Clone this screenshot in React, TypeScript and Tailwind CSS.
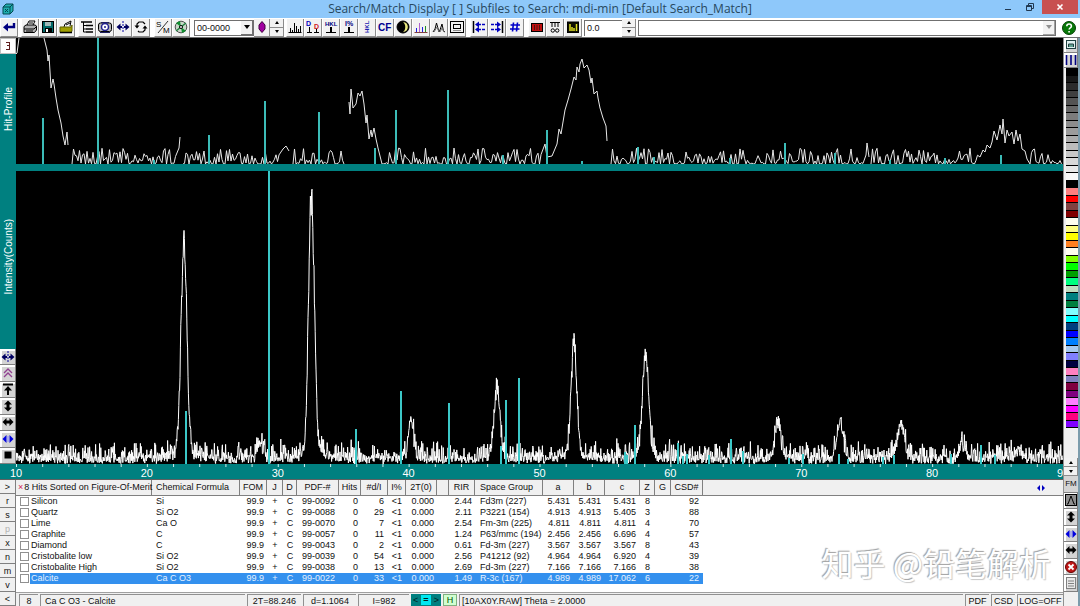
import React from 'react';

interface Peak {
  x: number;
  height: number;
  width: number;
}

type Point = [number, number];

const PLOT_WIDTH = 1047;
const MAIN_HEIGHT = 293;
const HIT_HEIGHT = 126;

const hits = [
  ['Silicon', 'Si', '99-0092', '6', '2.44', 'Fd3m (227)', '5.431', '5.431', '5.431', '8', '92'],
  ['Quartz', 'Si O2', '99-0088', '29', '2.11', 'P3221 (154)', '4.913', '4.913', '5.405', '3', '88'],
  ['Lime', 'Ca O', '99-0070', '7', '2.54', 'Fm-3m (225)', '4.811', '4.811', '4.811', '4', '70'],
  ['Graphite', 'C', '99-0057', '11', '1.24', 'P63/mmc (194)', '2.456', '2.456', '6.696', '4', '57'],
  ['Diamond', 'C', '99-0043', '2', '0.61', 'Fd-3m (227)', '3.567', '3.567', '3.567', '8', '43'],
  ['Cristobalite low', 'Si O2', '99-0039', '54', '2.56', 'P41212 (92)', '4.964', '4.964', '6.920', '4', '39'],
  ['Cristobalite High', 'Si O2', '99-0038', '13', '2.69', 'Fd-3m (227)', '7.166', '7.166', '7.166', '8', '38'],
  ['Calcite', 'Ca C O3', '99-0022', '33', '1.49', 'R-3c (167)', '4.989', '4.989', '17.062', '6', '22'],
];

const mainPeaks: Peak[] = [
  { x: 168, height: 203, width: 4.1 },
  { x: 295.5, height: 250, width: 4 },
  { x: 244, height: 14, width: 3 },
  { x: 395, height: 36, width: 3.6 },
  { x: 481, height: 68, width: 4 },
  { x: 558, height: 108, width: 4 },
  { x: 629.5, height: 103, width: 4.2 },
  { x: 762, height: 35, width: 4 },
  { x: 824, height: 38, width: 4 },
  { x: 885, height: 32, width: 4.5 },
  { x: 946, height: 14, width: 4 },
  { x: 1003, height: 7, width: 4 },
];

// [x, stick height]
const mainSticks: Point[] = [
  [170, 53], [253, 293], [340, 35], [385, 73], [433, 61], [485, 18], [490, 64], [503, 86],
  [609, 12], [611, 9], [619, 39], [662, 21], [667, 8], [671, 10], [693, 9], [715, 25], [727, 13],
  [773, 6], [787, 10], [823, 10], [832, 5], [867, 7], [878, 9], [935, 10], [965, 19], [979, 9],
];

const hitSticks: Point[] = [
  [27, 46], [82, 126], [138, 4], [193, 29], [249, 63], [303, 52], [359, 16], [380, 54], [432, 74],
  [487, 9], [531, 34], [566, 3], [622, 17], [638, 7], [714, 6], [769, 21], [819, 11], [874, 4],
  [929, 6], [985, 9],
];

function random(seed: number) {
  let s = seed;
  return () => {
    s = (s * 16807) % 2147483647;
    return s / 2147483647;
  };
}

function buildMainTrace() {
  const rnd = random(4711);
  const pts: string[] = [];
  for (let x = 0; x <= PLOT_WIDTH; x += 0.4) {
    let signal = 0;
    for (const p of mainPeaks) {
      const d = (x - p.x) / p.width;
      signal += p.height * Math.exp(-0.97 * d * d) + (p.height * 0.05) / (1 + (d * d) / 4);
    }
    const noise = Math.pow(rnd(), 4) * 17 + rnd() * 8;
    const jitter = (rnd() - 0.5) * Math.sqrt(signal) * 2.4;
    const y = MAIN_HEIGHT - Math.max(0, signal + jitter + (signal > 25 ? 6 : noise));
    pts.push(`${x.toFixed(1)},${y.toFixed(1)}`);
  }
  return pts.join(' ');
}

function noiseSegment(from: number, to: number, seed: number) {
  const rnd = random(seed);
  const pts: Point[] = [];
  for (let x = from; x <= to; x += 1.5) {
    pts.push([x, HIT_HEIGHT - Math.pow(rnd(), 2.2) * 16]);
  }
  return pts;
}

const hitSegments: Point[][] = [
  [[0, 16], [1, 15], [3, 0]],
  [[28, 0], [31, 12], [32, 23], [33, 17], [35, 50], [37, 41], [38, 46], [40, 60], [42, 72], [45, 85], [47, 98], [49, 107], [51, 94], [52, 107]],
  [...noiseSegment(56, 160, 91), [163, 110], [164, 99]],
  [...noiseSegment(167, 264, 17), [267, 111], [270, 108], [273, 113]],
  noiseSegment(277, 329, 53),
  [
    [333, 64], [334, 76], [335, 51], [337, 70], [340, 66], [342, 55], [344, 58], [346, 53], [348, 66], [350, 85],
    [351, 77], [353, 101], [355, 92], [356, 99], [358, 90], [360, 101], [362, 110], [364, 118], ...noiseSegment(366, 526, 77),
    [529, 106], [531, 119], [536, 118], [541, 106], [543, 91], [545, 96], [549, 72], [552, 62], [555, 51], [558, 39],
    [560, 42], [561, 29], [563, 34], [564, 26], [566, 21], [568, 30], [571, 27], [573, 32], [575, 45], [576, 40],
    [578, 56], [581, 53], [582, 60], [584, 70], [587, 80], [590, 88], [591, 103],
  ],
  [...noiseSegment(595, 848, 129), [850, 117], [851, 105], [853, 119]],
  [
    ...noiseSegment(855, 962, 15), [964, 119], [967, 112], [969, 114], [971, 107], [974, 110], [976, 104], [978, 93],
    [981, 102], [984, 87], [986, 96], [987, 81], [989, 105], [991, 92], [993, 98], [996, 94], [998, 106], [1000, 92],
    [1002, 103], [1004, 96], [1006, 111], [1009, 113], [1011, 121], ...noiseSegment(1014, 1046, 303),
  ],
];

const mainTrace = buildMainTrace();

const swatches = [
  '#000000', '#181818', '#2c2c2c', '#404040', '#545454', '#686868', '#7c7c7c', '#8c8c8c', '#9c9c9c', '#acacac',
  '#bcbcbc', '#c8c8c8', '#d8d8d8', '#e8e8e8', '#f8f8f8', '#000000', '#ff8080', '#ff0000', '#804040', '#800000',
  '#fffff0', '#ffff80', '#ffff00', '#ff8020', '#fffff0', '#80ff00', '#00ff00', '#00a000', '#00ff80', '#c0dcc0',
  '#008080', '#008040', '#80ffff', '#00ffff', '#004080', '#0000ff', '#0080ff', '#a6caf0', '#8080ff', '#000040',
  '#ff80c0', '#8080c0', '#800040', '#800080', '#ff80ff', '#ff00ff', '#ff0080', '#8000ff',
];

const Icon: React.FC<{ children: React.ReactNode }> = ({ children }) => (
  <svg viewBox="0 0 14 14" className="h-3.5 w-3.5 shrink-0" fill="none" stroke="#000" aria-hidden="true">
    {children}
  </svg>
);

const SplitArrows = () => (
  <Icon>
    <path d="M7 1v12" stroke="#0000a0" strokeDasharray="2 1" />
    <path d="M0.500 7l4-3.500v7zM13.500 7l-4-3.500v7z" fill="#000060" stroke="none" />
    <path d="M3 7h3M8 7h3" stroke="#000060" strokeWidth="2" />
  </Icon>
);

const UpDown = () => (
  <Icon>
    <path d="M7 1.500l4 4H3zM7 12.500l4-4H3z" fill="#000" stroke="none" />
    <path d="M7 4v6" strokeWidth="3" />
  </Icon>
);

const LeftRight = () => (
  <Icon>
    <path d="M1.500 7l4-4v8zM12.500 7l-4-4v8z" fill="#000" stroke="none" />
    <path d="M4 7h6" strokeWidth="3" />
  </Icon>
);

const BlueLeftRight = () => (
  <Icon>
    <path d="M1.500 7l4-4v8zM12.500 7l-4-4v8z" fill="#0000e0" stroke="none" />
    <path d="M7 4v6" stroke="#8080ff" />
  </Icon>
);

const toolIcons: Record<string, React.ReactNode> = {
  Return: (
    <Icon>
      <path d="M12 3v4H5" stroke="#000080" strokeWidth="2.4" />
      <path d="M1 7.2l5-4.2v8.4z" fill="#000080" stroke="none" />
    </Icon>
  ),
  Print: (
    <Icon>
      <path d="M4 5l2-4h6l-2 4" fill="#fff" />
      <path d="M1 6.5L3 5h9l1.5 1V10l-2 2.5H1z" fill="#b0b0b0" />
      <path d="M1 9h10l2-2M3 11h7M6 3h4" />
    </Icon>
  ),
  Save: (
    <Icon>
      <rect x="1.5" y="1.5" width="11" height="11" fill="#006868" />
      <rect x="4" y="2" width="6" height="4" fill="#a0b8b8" stroke="none" />
      <rect x="4" y="8" width="7" height="5" fill="#000" stroke="none" />
      <rect x="5" y="9" width="2" height="3" fill="#fff" stroke="none" />
    </Icon>
  ),
  Open: (
    <Icon>
      <path d="M5 7l1-3 6-3-1 5M7 5l4-2" fill="#fff" />
      <path d="M1 7h11l1-2v6l-1 1.5H1z" fill="#a0a000" stroke="#606000" />
      <path d="M1 12.5h12" strokeWidth="1.5" />
    </Icon>
  ),
  Outline: (
    <Icon>
      <path d="M1 2h11M6 5.500h7M6 9h7M6 12h7" strokeWidth="1.6" />
      <path d="M3.5 2v10H6M3.500 5.500H6M3.500 9H6" />
    </Icon>
  ),
  Camera: (
    <Icon>
      <rect x="0.5" y="3" width="13" height="8.5" rx="2" fill="#b8b8b8" />
      <circle cx="7" cy="7" r="3.5" fill="#fff" stroke="#202090" strokeWidth="1.5" />
      <circle cx="7" cy="7" r="1" fill="#202090" stroke="none" />
      <path d="M3 2.5h8M2 12.5h10" stroke="#202060" />
    </Icon>
  ),
  Split: <SplitArrows />,
  Cycle: (
    <Icon>
      <path d="M3 6V4l2-2h4l2 2M11 8v2l-2 2H5l-1-1" strokeWidth="1.2" />
      <path d="M0.5 5.500h5L3 8.500zM8.5 8.500h5L11 5.500z" fill="#000" stroke="none" />
    </Icon>
  ),
  'Search match': (
    <Icon>
      <path d="M2 13L12 1" strokeWidth="0.8" />
      <text x="0" y="7" fontSize="8" fontFamily="Liberation Sans" fill="#000" stroke="none">S</text>
      <text x="7" y="13" fontSize="8" fontFamily="Liberation Sans" fill="#000" stroke="none">M</text>
    </Icon>
  ),
  Disc: (
    <Icon>
      <circle cx="7" cy="7" r="5.8" fill="#c8d8c8" stroke="#505050" />
      <path d="M7 7L2 3l4-2zM7 7l5 4-4 2z" fill="#109030" stroke="none" />
      <path d="M7 7l5-4M7 7l-5 4" stroke="#208040" strokeWidth="1.5" />
      <circle cx="7" cy="7" r="1.5" fill="#fff" />
    </Icon>
  ),
  Sticks: (
    <Icon>
      <path d="M0.5 12.5h13M2.5 12V8M4.5 12V10M6.5 12V3M8.5 12V6M10.5 12V9M12.5 12V6" />
    </Icon>
  ),
  'D labels': (
    <Icon>
      <path d="M3.5 7v5M10.5 9v3" />
      <path d="M1 12.5h5M8 12.5h5" />
      <text x="0" y="6" fontSize="7" fontWeight="bold" fontFamily="Liberation Sans" fill="#0000c0" stroke="none">D</text>
      <text x="8" y="9" fontSize="7" fontWeight="bold" fontFamily="Liberation Sans" fill="#d02020" stroke="none">D</text>
    </Icon>
  ),
  'HKL labels': (
    <Icon>
      <text x="1" y="6" fontSize="6" fontWeight="bold" fontFamily="Liberation Sans" fill="#000080" stroke="none">HKL</text>
      <path d="M7 7v5" strokeWidth="2" />
      <path d="M2 12.5h10" />
    </Icon>
  ),
  'Intensity labels': (
    <Icon>
      <text x="3" y="6" fontSize="7" fontWeight="bold" fontFamily="Liberation Sans" fill="#000080" stroke="none">I%</text>
      <path d="M7 7v5" strokeWidth="2" />
      <path d="M2 12.5h10" />
    </Icon>
  ),
  'Vertical labels': (
    <Icon>
      <text x="1" y="9" transform="rotate(-90 7 7)" fontSize="6" fontWeight="bold" fontFamily="Liberation Sans" fill="#2020b0" stroke="none">HKL</text>
    </Icon>
  ),
  CF: (
    <Icon>
      <text x="0" y="11" fontSize="10" fontWeight="bold" fontFamily="Liberation Sans" fill="#000090" stroke="none">CF</text>
    </Icon>
  ),
  Contrast: (
    <Icon>
      <circle cx="7" cy="7" r="6" fill="#000" />
      <path d="M7 2c3 2 3 8 0 10c6.500 0 6.500-10 0-10z" fill="#e8e880" stroke="none" />
    </Icon>
  ),
  'Color sticks': (
    <Icon>
      <path d="M0.5 12.5h13" stroke="#804040" />
      <path d="M2.5 12V8M8.5 12V7" stroke="#2020e0" />
      <path d="M5.5 12V3" stroke="#b060d0" />
      <path d="M11.5 12V6" stroke="#209020" />
    </Icon>
  ),
  Profiles: (
    <Icon>
      <path d="M1 12l2-3 1.500-6 2.500 9 1-2 2-6 1.500 7 1.500 1" />
      <path d="M2 12l3-5 2 5M8 12l2-4 2 4" stroke="#707070" />
    </Icon>
  ),
  Frame: (
    <Icon>
      <rect x="0.5" y="1.5" width="13" height="11" />
      <rect x="3.5" y="4.5" width="7" height="4" />
      <path d="M3 10.5h8" stroke="#909090" />
    </Icon>
  ),
  'Shift left': (
    <Icon>
      <path d="M1.5 1v12" strokeWidth="1.5" />
      <path d="M6 4.5h7M6 9.5h7" stroke="#0000c0" strokeWidth="1.5" strokeDasharray="3 1" />
      <path d="M3 4.5l4-3v6zM3 9.5l4-3v6z" fill="#0000c0" stroke="none" />
    </Icon>
  ),
  'Shift right': (
    <Icon>
      <path d="M12.5 1v12" strokeWidth="1.5" />
      <path d="M1 4.5h7M1 9.5h7" stroke="#0000c0" strokeWidth="1.5" strokeDasharray="3 1" />
      <path d="M11 4.5l-4-3v6zM11 9.5l-4-3v6z" fill="#0000c0" stroke="none" />
    </Icon>
  ),
  Number: (
    <Icon>
      <path d="M5.5 2.500l-1 9M9.5 2.500l-1 9M2.5 5h9.500M2 9h9.500" stroke="#0000c8" strokeWidth="1.6" />
    </Icon>
  ),
  'Red panel': (
    <Icon>
      <rect x="1.500" y="3.500" width="11" height="8" fill="#c01010" />
      <path d="M4.5 5v5M7 5v5M9.5 5v5" stroke="#501010" />
    </Icon>
  ),
  Balance: (
    <Icon>
      <path d="M2 2.5h10M4 3v4M7 3v4M10 3v4" />
      <circle cx="4.8" cy="10.500" r="1.700" />
      <circle cx="9.2" cy="10.500" r="1.700" />
    </Icon>
  ),
  'Yellow panel': (
    <Icon>
      <rect x="1.500" y="2" width="11" height="10.500" fill="#101000" />
      <path d="M4 11V4M6 11V7M8 11V8M10.5 11V4" stroke="#e0e020" strokeWidth="1.5" />
    </Icon>
  ),
};

const ToolGroup: React.FC<{ names: string[] }> = ({ names }) => (
  <div className="flex">
    {names.map((name) => (
      <button
        key={name}
        aria-label={name}
        className="flex h-[18px] w-[18px] items-center justify-center border-r border-b border-l border-[#8c8c8c] border-l-white bg-[#f2f2f2]"
      >
        {toolIcons[name]}
      </button>
    ))}
  </div>
);

const Spinner: React.FC<{ label: string }> = ({ label }) => (
  <div className="flex h-[18px] w-3.5 shrink-0 flex-col border-r border-b border-[#8c8c8c] bg-[#f2f2f2]">
    <button aria-label={`${label} up`} className="flex flex-1 items-center justify-center border-b border-[#8c8c8c]">
      <svg viewBox="0 0 4 3" className="h-[3px] w-1"><path d="M0 3h4L2 0z" /></svg>
    </button>
    <button aria-label={`${label} down`} className="flex flex-1 items-center justify-center">
      <svg viewBox="0 0 4 3" className="h-[3px] w-1"><path d="M0 0h4L2 3z" /></svg>
    </button>
  </div>
);

const RailButton: React.FC<{ label: string; children: React.ReactNode }> = ({ label, children }) => (
  <button
    aria-label={label}
    className="flex min-h-0 w-full flex-1 items-center justify-center border-r border-b border-[#808080] bg-[#d4d4d4] shadow-[inset_2px_2px_0_#fff]"
  >
    {children}
  </button>
);

const Toolbar = () => (
  <div className="flex h-5 shrink-0 items-center border-b border-[#707070] bg-white">
    <ToolGroup names={['Return']} />
    <div className="ml-[3px]"><ToolGroup names={['Print', 'Save', 'Open']} /></div>
    <div className="ml-[3px]"><ToolGroup names={['Outline', 'Camera', 'Split', 'Cycle']} /></div>
    <div className="ml-1"><ToolGroup names={['Search match', 'Disc']} /></div>
    <div className="relative ml-1 h-4 w-[60px]">
      <select aria-label="PDF number" className="block h-4 w-full appearance-none border border-[#707070] bg-white pl-0.5 text-[9px] leading-3">
        <option>00-0000</option>
      </select>
      <span className="pointer-events-none absolute top-px right-px flex h-3.5 w-3 items-center justify-center border-r border-b border-[#707070] bg-[#f2f2f2]">
        <svg viewBox="0 0 6 4" className="h-1 w-1.5"><path d="M0 0h6L3 4z" /></svg>
      </span>
    </div>
    <button aria-label="Color" className="flex h-[18px] w-4 items-center justify-center border-r border-b border-[#8c8c8c] bg-[#f2f2f2]">
      <svg viewBox="0 0 10 14" className="h-3.5 w-2.5"><path d="M5 1.500l3 3.500v4l-3 3.500-3-3.500V5z" fill="#a000a0" stroke="#400040" /></svg>
    </button>
    <Spinner label="Line" />
    <div className="ml-0.5">
      <ToolGroup
        names={['Sticks', 'D labels', 'HKL labels', 'Intensity labels', 'Vertical labels', 'CF', 'Contrast', 'Color sticks', 'Profiles', 'Frame']}
      />
    </div>
    <div className="ml-1"><ToolGroup names={['Shift left', 'Shift right', 'Number']} /></div>
    <div className="ml-1"><ToolGroup names={['Red panel', 'Balance', 'Yellow panel']} /></div>
    <input aria-label="Offset" defaultValue="0.0" className="ml-0.5 h-4 w-[38px] border-t border-l border-[#707070] bg-white pl-0.5 text-[9px]" />
    <Spinner label="Offset" />
    <div className="relative ml-0.5 h-4 min-w-0 flex-1">
      <select aria-label="Phase" className="block h-4 w-full appearance-none border border-[#707070] bg-white text-[9px]" />
      <span className="pointer-events-none absolute top-px right-px flex h-3.5 w-3 items-center justify-center border-r border-b border-[#a0a0a0] bg-[#f2f2f2]">
        <svg viewBox="0 0 6 4" className="h-1 w-1.5"><path d="M0 0h6L3 4z" fill="#909090" /></svg>
      </span>
    </div>
    <button aria-label="Help" className="mr-1 ml-1.5 flex h-[18px] w-3.5 items-center justify-center">
      <svg viewBox="0 0 14 14" className="h-3.5 w-3.5">
        <circle cx="7" cy="7" r="6.5" fill="#087808" stroke="#044004" />
        <path d="M4.800 5.200c0-3 4.600-3 4.600 0 0 1.600-2.300 1.600-2.300 3.300M7.100 10v1.600" fill="none" stroke="#fff" strokeWidth="1.6" />
      </svg>
    </button>
  </div>
);

const HitProfile = () => (
  <svg viewBox={`0 0 ${PLOT_WIDTH} ${HIT_HEIGHT}`} preserveAspectRatio="none" className="block h-full w-full bg-black">
    {hitSegments.map((seg, i) => (
      <polyline key={i} points={seg.map((p) => p.join(',')).join(' ')} fill="none" stroke="#e8e8e8" />
    ))}
    {hitSticks.map(([x, h]) => (
      <rect key={x} x={x - 1} y={HIT_HEIGHT - h} width="2" height={h} fill="#3cbcb8" />
    ))}
  </svg>
);

const MainPlot = () => (
  <svg viewBox={`0 0 ${PLOT_WIDTH} ${MAIN_HEIGHT}`} preserveAspectRatio="none" className="block h-full w-full bg-black">
    <polyline points={mainTrace} fill="none" stroke="#fff" />
    {mainSticks.map(([x, h]) => (
      <rect key={x} x={x - 1} y={MAIN_HEIGHT - h} width="2" height={h} fill="#3cc8c8" />
    ))}
  </svg>
);

const Axis = () => (
  <div className="h-[15px] shrink-0 text-[11px] leading-3 text-white">
    <svg viewBox={`0 0 ${PLOT_WIDTH} 3`} preserveAspectRatio="none" className="block h-[3px] w-full">
      {Array.from({ length: 41 }, (_, i) => (
        <rect key={i} x={(i * PLOT_WIDTH) / 40} y="0" width="1" height="3" fill="#d0f0f0" />
      ))}
    </svg>
    <div className="flex justify-between">
      {[10, 20, 30, 40, 50, 60, 70, 80, 90].map((t) => (
        <span key={t} className="flex w-0 justify-center">{t}</span>
      ))}
    </div>
  </div>
);

const LeftRail = () => (
  <div className="flex w-4 shrink-0 flex-col pb-[15px]">
    <button aria-label="Scale" className="flex h-4 w-full items-center justify-center border border-[#c0c0c0] bg-white">
      <svg viewBox="0 0 8 10" className="h-2.5 w-2"><path d="M5.5 1v8M2 1.5h4M3 4.5h3M2 8.5h4" fill="none" stroke="#602020" /></svg>
    </button>
    <div className="flex flex-[110] items-center justify-center text-[10px] text-white">
      <span className="rotate-180 [writing-mode:vertical-rl]">Hit-Profile</span>
    </div>
    <div className="flex flex-[185] items-center justify-center text-[10px] text-white">
      <span className="rotate-180 [writing-mode:vertical-rl]">Intensity(Counts)</span>
    </div>
    <div className="flex h-[115px] flex-col">
      <RailButton label="Split"><SplitArrows /></RailButton>
      <RailButton label="Raise">
        <Icon><path d="M3 7l4-4 4 4M3 11l4-4 4 4" stroke="#904090" strokeWidth="1.3" /></Icon>
      </RailButton>
      <RailButton label="Top">
        <Icon>
          <path d="M2 1.500h10M7 6v6" strokeWidth="2" />
          <path d="M7 3l4 4.500H3z" fill="#000" stroke="none" />
        </Icon>
      </RailButton>
      <RailButton label="Zoom vertical"><UpDown /></RailButton>
      <RailButton label="Zoom horizontal"><LeftRight /></RailButton>
      <RailButton label="Pan"><BlueLeftRight /></RailButton>
      <RailButton label="Full range">
        <Icon><rect x="3.500" y="3.500" width="7" height="7" fill="#000" stroke="none" /></Icon>
      </RailButton>
    </div>
  </div>
);

const RightRail = () => (
  <aside className="flex w-[17px] shrink-0 flex-col border-r-2 border-l border-[#909090] border-r-[#7c9cac] bg-[#f0f0f0]">
    <div className="flex h-[30px] flex-col">
      <RailButton label="Window">
        <Icon>
          <rect x="2.500" y="2.5" width="9" height="8" fill="#e0f0f0" stroke="#204040" />
          <path d="M4.500 9V6h5v3" fill="#60a090" stroke="#204040" />
        </Icon>
      </RailButton>
      <RailButton label="Lines">
        <Icon><path d="M2.5 2v10M7 2v10M11.5 2v10" stroke="#000080" strokeWidth="1.6" /></Icon>
      </RailButton>
    </div>
    <div className="flex h-[360px] flex-col pl-0.5">
      {swatches.map((color, i) => (
        <button key={i} aria-label={`Color ${color}`} className="min-h-0 flex-1 border-b border-black" style={{ backgroundColor: color }} />
      ))}
    </div>
    <div className="flex-1" />
    <Spinner label="Scale" />
    <div className="flex h-[116px] flex-col">
      <button className="flex-1 border-b border-[#808080] bg-[#d4d4d4] text-[8px]">FM</button>
      <RailButton label="Peak">
        <Icon>
          <rect x="1.5" y="1.5" width="11" height="11" fill="#909090" />
          <path d="M3 11h1l3-8 3 8h1" />
        </Icon>
      </RailButton>
      <RailButton label="Expand vertical"><UpDown /></RailButton>
      <RailButton label="Move"><BlueLeftRight /></RailButton>
      <RailButton label="Expand horizontal"><LeftRight /></RailButton>
      <RailButton label="Cancel">
        <Icon>
          <circle cx="7" cy="7" r="5.5" fill="#c01818" stroke="#600" />
          <path d="M4.5 4.5l5 5M9.5 4.5l-5 5" stroke="#fff" strokeWidth="1.8" />
        </Icon>
      </RailButton>
      <RailButton label="Report">
        <Icon>
          <rect x="2.5" y="1.5" width="9" height="11" fill="#e8e8e8" stroke="#808080" />
          <path d="M4 5h6M4 7.5h6M4 10h6" stroke="#808080" />
        </Icon>
      </RailButton>
    </div>
    <div className="h-3.5" />
  </aside>
);

const head = 'h-4 border-r border-b border-[#808080] p-0 font-normal whitespace-nowrap';

const HitTable = () => (
  <table className="w-full table-fixed border-separate border-spacing-0 text-[9px] leading-[11px]">
    <colgroup>
      <col className="w-[136px]" />
      <col className="w-[88px]" />
      <col className="w-[27px]" />
      <col className="w-4" />
      <col className="w-3.5" />
      <col className="w-[42px]" />
      <col className="w-[22px]" />
      <col className="w-[27px]" />
      <col className="w-[18px]" />
      <col className="w-[31px]" />
      <col className="w-3" />
      <col className="w-[26px]" />
      <col className="w-[68px]" />
      <col className="w-[31px]" />
      <col className="w-[31px]" />
      <col className="w-[35px]" />
      <col className="w-[15px]" />
      <col className="w-4" />
      <col className="w-8" />
      <col />
    </colgroup>
    <thead>
      <tr className="bg-[#f0f0f0]">
        <th className={`${head} pl-0.5 text-left`}>
          <span className="mr-px text-[#d02050]">×</span>8 Hits Sorted on Figure-Of-Merit
        </th>
        <th className={`${head} pl-1 text-left`}>Chemical Formula</th>
        <th className={head}>FOM</th>
        <th className={head}>J</th>
        <th className={head}>D</th>
        <th className={head}>PDF-#</th>
        <th className={head}>Hits</th>
        <th className={head}>#d/I</th>
        <th className={head}>I%</th>
        <th className={head}>2T(0)</th>
        <th className={head} />
        <th className={head}>RIR</th>
        <th className={`${head} pl-[5px] text-left`}>Space Group</th>
        <th className={head}>a</th>
        <th className={head}>b</th>
        <th className={head}>c</th>
        <th className={head}>Z</th>
        <th className={head}>G</th>
        <th className={head}>CSD#</th>
        <th className="border-b border-[#808080] p-0 pr-[18px]">
          <svg viewBox="0 0 8 6" className="ml-auto h-1.5 w-2"><path d="M0 3l3-3v6zM8 3L5 0v6z" fill="#0000c0" /></svg>
        </th>
      </tr>
    </thead>
    <tbody>
      {hits.map(([name, formula, pdf, lines, rir, group, a, b, c, z, csd]) => {
        const selected = name === 'Calcite';
        const cell = selected ? 'p-0 whitespace-nowrap bg-[#3390ee] text-[#e4f0ff]' : 'p-0 whitespace-nowrap';
        return (
          <tr key={name}>
            <td className="p-0">
              <label className="flex h-[11px] items-center pl-1">
                <input type="checkbox" className="h-[9px] w-[9px] shrink-0 appearance-none border border-[#909090] bg-white" />
                <span className={selected ? 'ml-px flex-1 bg-[#3390ee] pl-px text-[#e4f0ff]' : 'ml-px flex-1 pl-px'}>{name}</span>
              </label>
            </td>
            <td className={`${cell} pl-1`}>{formula}</td>
            <td className={`${cell} pr-[3px] text-right`}>99.9</td>
            <td className={`${cell} text-center`}>+</td>
            <td className={`${cell} text-center`}>C</td>
            <td className={`${cell} pr-1 text-right`}>{pdf}</td>
            <td className={`${cell} pr-[3px] text-right`}>0</td>
            <td className={`${cell} pr-1 text-right`}>{lines}</td>
            <td className={`${cell} text-center`}>&lt;1</td>
            <td className={`${cell} pr-[3px] text-right`}>0.000</td>
            <td className={cell} />
            <td className={`${cell} pr-[3px] text-right`}>{rir}</td>
            <td className={`${cell} pl-[5px]`}>{group}</td>
            <td className={`${cell} pr-1 text-right`}>{a}</td>
            <td className={`${cell} pr-1 text-right`}>{b}</td>
            <td className={`${cell} pr-1 text-right`}>{c}</td>
            <td className={`${cell} text-center`}>{z}</td>
            <td className={cell} />
            <td className={`${cell} pr-1 text-right`}>{csd}</td>
            <td className="p-0" />
          </tr>
        );
      })}
    </tbody>
  </table>
);

const field = 'flex h-3 items-center border-t border-l border-[#909090] whitespace-nowrap';

const StatusBar = () => (
  <footer className="flex h-3.5 shrink-0 items-end gap-0.5 border-t border-[#a0a0a0] bg-[#f0f0f0] pl-[3px] text-[9px] leading-3">
    <span className={`${field} w-[19px] justify-center`}>8</span>
    <span className={`${field} w-[205px] pl-1`}>Ca C O3 - Calcite</span>
    <span className={`${field} w-[54px] justify-center`}>2T=88.246</span>
    <span className={`${field} w-[53px] justify-center`}>d=1.1064</span>
    <span className={`${field} w-[51px] justify-center`}>I=982</span>
    <span className="flex h-3 w-[30px] items-center justify-between bg-[#008080] px-0.5 text-[#002020]">
      &lt;<span className="flex h-2.5 w-2.5 items-center justify-center bg-[#00e8f0] font-bold">=</span>&gt;
    </span>
    <span className="flex h-3 w-3.5 items-center justify-center border border-[#80b080] bg-[#d0ffd0] text-[#005000]">H</span>
    <span className={`${field} min-w-0 flex-1 pl-0.5`}>[10AX0Y.RAW] Theta = 2.0000</span>
    <span className={`${field} w-6 justify-center`}>PDF</span>
    <span className={`${field} w-6 justify-center`}>CSD</span>
    <span className={`${field} w-[46px] justify-center`}>LOG=OFF</span>
  </footer>
);

const App: React.FC = () => {
  return (
    <div className="flex h-screen flex-col overflow-hidden bg-[#f0f0f0] font-['Liberation_Sans',Arial,sans-serif] text-[#101010]">
      <header className="flex h-[18px] shrink-0 items-center bg-[#8ec8fa]">
        <div className="w-[100px] pl-0.5">
          <svg viewBox="0 0 12 12" className="h-3 w-3">
            <path d="M1 4l3-3h7v7l-3 3H1z" fill="#20b0b0" stroke="#004850" />
            <path d="M1 4h7v7M8 4l3-3M3 6l3 3M6 6L3 9" fill="none" stroke="#004850" />
          </svg>
        </div>
        <h1 className="flex-1 text-center font-['Open_Sans',sans-serif] text-[12px] leading-4 text-[#284860]">
          Search/Match Display [ ] Subfiles to Search: mdi-min [Default Search_Match]
        </h1>
        <div className="flex h-full w-[100px] justify-end pr-0.5">
          <button aria-label="Minimize" className="flex h-4 w-5 items-center justify-center">
            <svg viewBox="0 0 8 8" className="h-2 w-2"><path d="M1 5.500h6" stroke="#203850" /></svg>
          </button>
          <button aria-label="Restore" className="flex h-3.5 w-6 items-center justify-center">
            <svg viewBox="0 0 10 10" className="h-2.5 w-2.5" fill="none" stroke="#203850"><path d="M3.5 3V1.5h5v5H7M1.5 3.5h5v5h-5zM1 4.5h6" /></svg>
          </button>
          <button aria-label="Close" className="flex h-3.5 w-9 items-center justify-center bg-[#c85050]">
            <svg viewBox="0 0 8 8" className="h-2 w-2"><path d="M1.5 1.5l5 5M6.5 1.5l-5 5" stroke="#fff" strokeWidth="1.6" /></svg>
          </button>
        </div>
      </header>
      <Toolbar />
      <div className="flex min-h-0 flex-1">
        <div className="flex min-w-0 flex-1 flex-col">
          {/* Plots */}
          <section className="flex min-h-0 flex-1 overflow-hidden bg-[#008080]">
            <LeftRail />
            <div className="flex min-w-0 flex-1 flex-col">
              <div className="min-h-0 flex-[126]"><HitProfile /></div>
              <div className="h-[7px] shrink-0" />
              <div className="min-h-0 flex-[293]"><MainPlot /></div>
              <Axis />
            </div>
          </section>

          {/* Hit list */}
          <section className="flex shrink-0 border-t border-[#606060]">
            <div className="flex w-4 shrink-0 flex-col">
              {['>', 'r', 's', 'p', 'x', 'n', 'm', 'v', '<'].map((key) => (
                <button
                  key={key}
                  className={`h-3.5 border-r border-b border-[#808080] bg-[#f0f0f0] text-[9px] leading-3 ${key === 'p' ? 'text-[#b0b0b0]' : ''}`}
                >
                  {key}
                </button>
              ))}
            </div>
            <div className="relative flex min-w-0 flex-1 flex-col bg-white">
              <div className="flex-1"><HitTable /></div>
              <StatusBar />
              <div className="pointer-events-none absolute right-3 bottom-6 font-['Noto_Sans_CJK_SC',sans-serif] text-[32px] leading-10 text-white [text-shadow:-1px_-1px_1px_#a0a0a0,1px_1px_1px_#c8c8c8]">
                知乎 @铅笔解析
              </div>
            </div>
          </section>
        </div>
        <RightRail />
      </div>
    </div>
  );
};

export default App;
